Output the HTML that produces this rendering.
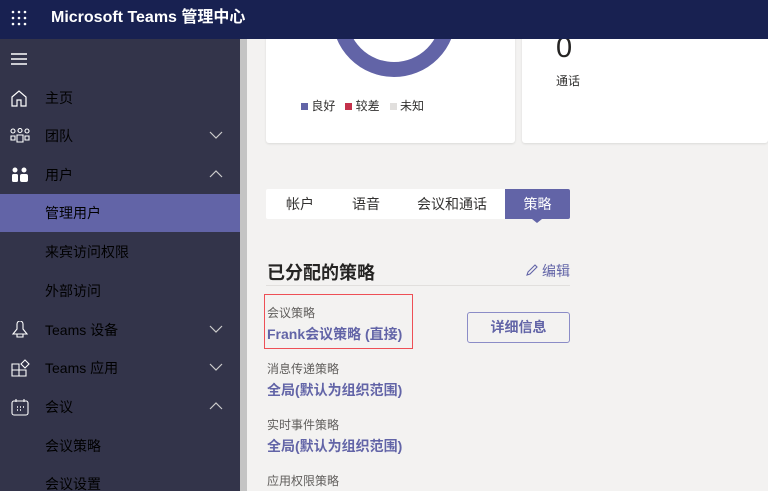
<!DOCTYPE html>
<html style="width:768px;height:491px;overflow:hidden"><head><meta charset="utf-8"><style>
*{margin:0;padding:0;box-sizing:border-box}
body{width:768px;height:491px;overflow:hidden;background:#f3f2f1;font-family:"Liberation Sans","Noto Sans CJK SC",sans-serif;position:relative}
.hdr{position:absolute;left:0;top:0;width:768px;height:39px;background:#182151;color:#fff}
.side{position:absolute;left:0;top:39px;width:240px;height:452px;background:#33344a;color:#fff}
.sb{position:absolute;left:240px;top:39px;width:7px;height:452px;background:#c4c4c4}
.it{position:absolute;left:0;width:240px;height:38px;font-size:14px;line-height:38px}
.it .t{position:absolute;left:45px}
.it svg{position:absolute}
.chev{position:absolute;left:209px;top:14px}
.abs{position:absolute}
.card{position:absolute;background:#fff;border-radius:3px;box-shadow:0 1px 2px rgba(0,0,0,.1)}
.lbl{position:absolute;left:267px;font-size:12px;color:#605e5c}
.val{position:absolute;left:267px;font-size:14px;font-weight:bold;color:#6264a7}
</style></head><body>
<div class="side">
<svg class="abs" style="left:11px;top:14px" width="16" height="12" stroke="#fff" stroke-width="1.6"><path d="M0 1H16M0 6H16M0 11H16"/></svg>
</div>
<div class="sb"></div>
<div style="position:absolute;left:0;top:0;width:240px;height:491px;overflow:hidden">
<div class="it" style="top:79px"><svg style="left:10px;top:10px" width="18" height="18" fill="none" stroke="#fff" stroke-width="1.2"><path d="M2 8L9 2L16 8V17H11V11H7V17H2Z"/></svg><span class="t">主页</span></div>
<div class="it" style="top:117px"><svg style="left:10px;top:11px" width="20" height="16" fill="none" stroke="#fff" stroke-width="1.1"><circle cx="3" cy="3" r="2"/><circle cx="10" cy="2.5" r="2"/><circle cx="17" cy="3" r="2"/><path d="M1 8H5V12H1ZM7 7H13V14H7ZM15 8H19V12H15Z"/></svg><span class="t">团队</span><svg class="chev" width="14" height="8" fill="none" stroke="#ccc" stroke-width="1.2"><path d="M1 1L7 7L13 1"/></svg></div>
<div class="it" style="top:156px"><svg style="left:11px;top:11px" width="18" height="16" fill="#fff"><circle cx="4" cy="3" r="2.5"/><circle cx="13" cy="3" r="2.5"/><rect x="1" y="7" width="6" height="8" rx="1.5"/><rect x="9" y="7" width="8" height="8" rx="2"/></svg><span class="t">用户</span><svg class="chev" width="14" height="8" fill="none" stroke="#ccc" stroke-width="1.2"><path d="M1 7L7 1L13 7"/></svg></div>
<div class="it" style="top:194px;background:#6264a7"><span class="t">管理用户</span></div>
<div class="it" style="top:233px"><span class="t">来宾访问权限</span></div>
<div class="it" style="top:272px"><span class="t">外部访问</span></div>
<div class="it" style="top:311px"><svg style="left:11px;top:10px" width="18" height="18" fill="none" stroke="#fff" stroke-width="1.1"><path d="M6 3A3 3 0 0 1 12 3V8L16 13H2L6 8Z"/><path d="M6 13V16H12V13"/></svg><span class="t">Teams 设备</span><svg class="chev" width="14" height="8" fill="none" stroke="#ccc" stroke-width="1.2"><path d="M1 1L7 7L13 1"/></svg></div>
<div class="it" style="top:349px"><svg style="left:11px;top:10px" width="20" height="18" fill="none" stroke="#fff" stroke-width="1.1"><path d="M1 5H8V17H1ZM1 11H15V17H8M14 1L18 5L14 9L10 5Z"/></svg><span class="t">Teams 应用</span><svg class="chev" width="14" height="8" fill="none" stroke="#ccc" stroke-width="1.2"><path d="M1 1L7 7L13 1"/></svg></div>
<div class="it" style="top:388px"><svg style="left:11px;top:10px" width="18" height="18" fill="none" stroke="#fff" stroke-width="1.1"><rect x="1" y="3" width="16" height="14" rx="2"/><path d="M5 1V4M13 1V4"/><path d="M6 9H7M9 9H10M12 9H13M6 12H7M9 12H10" stroke-width="1.6"/></svg><span class="t">会议</span><svg class="chev" width="14" height="8" fill="none" stroke="#ccc" stroke-width="1.2"><path d="M1 7L7 1L13 7"/></svg></div>
<div class="it" style="top:427px"><span class="t">会议策略</span></div>
<div class="it" style="top:465px;height:26px;overflow:hidden"><span class="t">会议设置</span></div>
</div>
<div class="card" style="left:266px;top:30px;width:249px;height:113px;overflow:hidden">
<svg class="abs" style="left:66px;top:-77px" width="124" height="124"><circle cx="62" cy="62" r="54.5" fill="none" stroke="#6264a7" stroke-width="15"/></svg>
<div class="abs" style="left:35px;top:69px;font-size:12px;color:#323130;line-height:14px;white-space:nowrap">
<span style="display:inline-block;width:7px;height:7px;background:#6264a7"></span> 良好 &nbsp;&nbsp;<span style="display:inline-block;width:7px;height:7px;background:#c4314b"></span> 较差 &nbsp;&nbsp;<span style="display:inline-block;width:7px;height:7px;background:#e1dfdd"></span> 未知</div>
</div>
<div class="card" style="left:522px;top:30px;width:246px;height:113px">
<div class="abs" style="left:34px;top:2px;font-size:29px;color:#252423">0</div>
<div class="abs" style="left:34px;top:42px;font-size:12px;color:#323130">通话</div>
</div>
<div class="hdr" style="z-index:3"><svg class="abs" style="left:11px;top:10px" width="16" height="16" fill="#fff"><g><circle cx="2" cy="2" r="1.3"/><circle cx="8" cy="2" r="1.3"/><circle cx="14" cy="2" r="1.3"/><circle cx="2" cy="8" r="1.3"/><circle cx="8" cy="8" r="1.3"/><circle cx="14" cy="8" r="1.3"/><circle cx="2" cy="14" r="1.3"/><circle cx="8" cy="14" r="1.3"/><circle cx="14" cy="14" r="1.3"/></g></svg>
<div class="abs" style="left:51px;top:8px;font-size:16px;font-weight:bold;line-height:20px">Microsoft Teams 管理中心</div></div>
<div class="abs" style="left:266px;top:189px;width:304px;height:30px;background:#fff;border-radius:2px;font-size:14px;color:#323130;line-height:30px">
<span class="abs" style="left:20px">帐户</span><span class="abs" style="left:86px">语音</span><span class="abs" style="left:151px">会议和通话</span>
<div class="abs" style="left:239px;top:0;width:65px;height:30px;background:#6264a7;color:#fff;text-align:center;border-radius:0 2px 2px 0">策略</div>
<div class="abs" style="left:266px;top:30px;width:0;height:0;border-left:5px solid transparent;border-right:5px solid transparent;border-top:4px solid #6264a7"></div>
</div>
<div class="abs" style="left:267px;top:259px;font-size:18px;font-weight:bold;color:#252423">已分配的策略</div>
<svg class="abs" style="left:525px;top:263px" width="14" height="14" fill="none" stroke="#6264a7" stroke-width="1.1"><path d="M2 12L3 9L10 2L12 4L5 11Z"/></svg>
<div class="abs" style="left:542px;top:261px;font-size:14px;color:#6264a7">编辑</div>
<div class="abs" style="left:266px;top:285px;width:304px;height:1px;background:#e1dfdd"></div>
<div class="abs" style="left:264px;top:294px;width:149px;height:55px;border:1px solid #ee4f56"></div>
<div class="lbl" style="top:304px">会议策略</div>
<div class="val" style="top:324px">Frank会议策略 (直接)</div>
<div class="abs" style="left:467px;top:312px;width:103px;height:31px;border:1px solid #8b8cc7;border-radius:3px;color:#6264a7;font-size:14px;font-weight:bold;text-align:center;line-height:29px">详细信息</div>
<div class="lbl" style="top:360px">消息传递策略</div>
<div class="val" style="top:380px">全局(默认为组织范围)</div>
<div class="lbl" style="top:416px">实时事件策略</div>
<div class="val" style="top:436px">全局(默认为组织范围)</div>
<div class="lbl" style="top:472px;height:19px;overflow:hidden">应用权限策略</div>
</body></html>
